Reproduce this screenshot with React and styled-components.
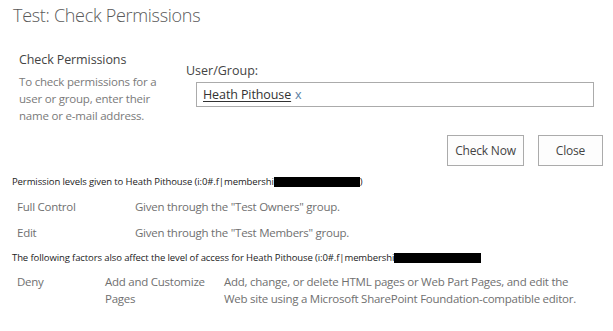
import React from "react";
import styled, { createGlobalStyle } from "styled-components";

const GlobalStyle = createGlobalStyle`
  html, body {
    margin: 0;
    padding: 0;
    background: #fff;
  }
  body {
    font-family: "Open Sans", "Noto Sans", Arial, sans-serif;
    color: #444;
  }
`;

const Page = styled.div`
  width: 613px;
  height: 331px;
  overflow: hidden;
  box-sizing: border-box;
  padding: 0 10px 0 12px;
`;

const Title = styled.h1`
  margin: 0;
  padding: 2px 0 0 1px;
  font-size: 18px;
  font-weight: 300;
  line-height: 26px;
  color: #5a5a5a;
  letter-spacing: -0.3px;
`;

const Section = styled.div`
  display: flex;
  margin-top: 23px;
`;

const Intro = styled.div`
  width: 167px;
  padding-left: 7px;
  box-sizing: border-box;
`;

const SectionHead = styled.div`
  font-size: 12.5px;
  line-height: 17px;
  color: #444;
  letter-spacing: -0.1px;
`;

const SectionText = styled.div`
  margin-top: 5px;
  font-size: 11.5px;
  line-height: 17px;
  color: #7a7a7a;
  letter-spacing: -0.2px;
`;

const Field = styled.div`
  flex: 1;
  padding: 12px 0 0 7px;
`;

const Label = styled.div`
  font-size: 12.5px;
  line-height: 16px;
  color: #444;
`;

const Input = styled.div`
  margin: 3px 0 0 10px;
  width: 398px;
  height: 25px;
  box-sizing: border-box;
  border: 1px solid #ababab;
  padding: 0 6px;
  display: flex;
  align-items: center;
  font-size: 12.5px;
  letter-spacing: -0.1px;
`;

const Person = styled.span`
  color: #333;
  text-decoration: underline;
  text-underline-offset: 2px;
`;

const Remove = styled.span`
  color: #5a7ea4;
  margin-left: 4px;
`;

const Buttons = styled.div`
  display: flex;
  justify-content: flex-end;
  gap: 14px;
  margin-top: 11px;
`;

const Button = styled.button`
  width: ${(p) => p.w}px;
  height: 31px;
  border: 1px solid #ababab;
  background: #fdfdfd;
  font-family: inherit;
  font-size: 12px;
  letter-spacing: -0.2px;
  color: #444;
  padding: 0;
`;

const Caption = styled.div`
  margin-top: ${(p) => p.top}px;
  font-size: 9.5px;
  letter-spacing: -0.1px;
  line-height: 14px;
  color: #222;
  white-space: nowrap;
  display: flex;
  align-items: center;
`;

const Blackout = styled.span`
  display: inline-block;
  width: ${(p) => p.w}px;
  height: 10px;
  background: #000;
`;

const Row = styled.div`
  display: grid;
  grid-template-columns: ${(p) => p.cols};
  padding-left: 5px;
  margin-top: ${(p) => p.top}px;
  font-size: 11.5px;
  letter-spacing: -0.25px;
  line-height: 17px;
  color: #707070;
  white-space: nowrap;
`;

const Cell = styled.div``;

export default function App() {
  return (
    <>
      <GlobalStyle />
      <Page>
        <Title>Test: Check Permissions</Title>
        <Section>
          <Intro>
            <SectionHead>Check Permissions</SectionHead>
            <SectionText>
              To check permissions for a
              <br />
              user or group, enter their
              <br />
              name or e-mail address.
            </SectionText>
          </Intro>
          <Field>
            <Label>User/Group:</Label>
            <Input>
              <Person>Heath Pithouse</Person>
              <Remove>x</Remove>
            </Input>
          </Field>
        </Section>
        <Buttons>
          <Button w={77}>Check Now</Button>
          <Button w={65}>Close</Button>
        </Buttons>
        <Caption top={9}>
          Permission levels given to Heath Pithouse (i:0#.f|membershi
          <Blackout w={86} />)
        </Caption>
        <Row top={9} cols="118px 1fr">
          <Cell>Full Control</Cell>
          <Cell>Given through the "Test Owners" group.</Cell>
        </Row>
        <Row top={9} cols="118px 1fr">
          <Cell>Edit</Cell>
          <Cell>Given through the "Test Members" group.</Cell>
        </Row>
        <Caption top={10}>
          The following factors also affect the level of access for Heath Pithouse (i:0#.f|membershi
          <Blackout w={87} />
        </Caption>
        <Row top={8} cols="88px 119px 1fr">
          <Cell>Deny</Cell>
          <Cell>
            Add and Customize
            <br />
            Pages
          </Cell>
          <Cell>
            Add, change, or delete HTML pages or Web Part Pages, and edit the
            <br />
            Web site using a Microsoft SharePoint Foundation-compatible editor.
          </Cell>
        </Row>
      </Page>
    </>
  );
}
